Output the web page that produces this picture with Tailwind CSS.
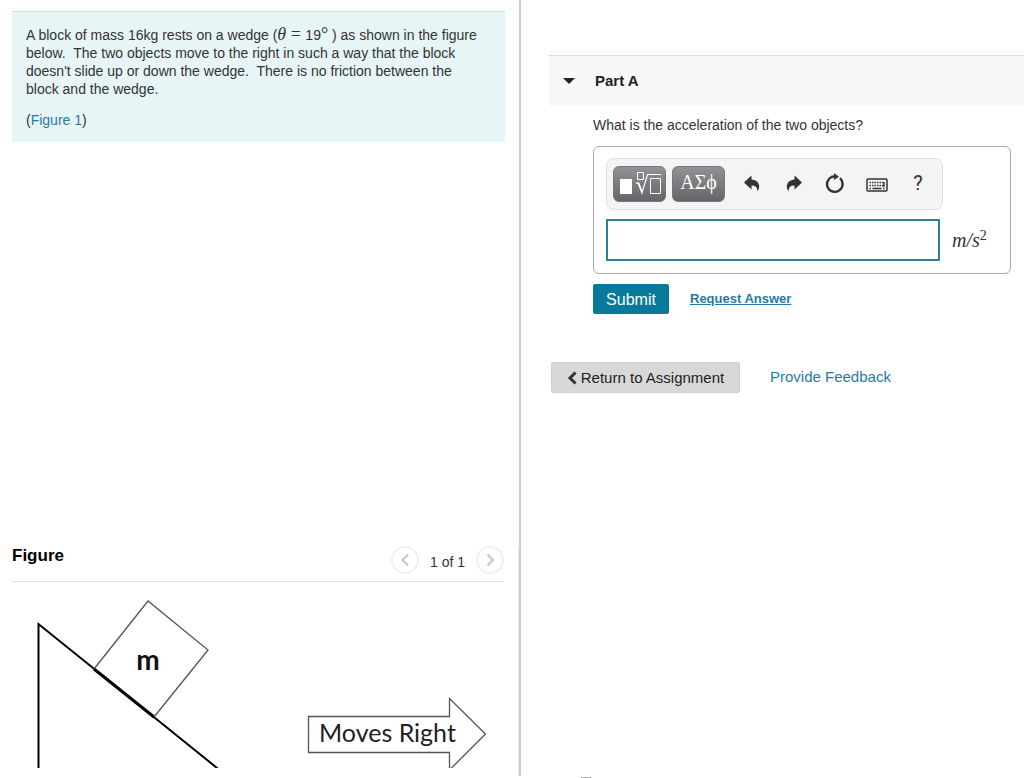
<!doctype html>
<html lang="en">
<head>
    <meta charset="UTF-8">
    <meta name="viewport" content="width=device-width, initial-scale=1.0">
    <title>Part A | Block on a wedge</title>
    <script src="https://cdn.jsdelivr.net/npm/@tailwindcss/browser@4"></script>
</head>

<body class="bg-white font-['Liberation_Sans',Arial,sans-serif] text-[14px] leading-[18px] text-[#333]">
    <main class="grid grid-cols-[521fr_503fr] h-screen overflow-hidden">
        <!-- problem and figure -->
        <div class="flex flex-col justify-between mb-0.5 pt-[11px] pl-3 border-r-2 border-[#c5d1dc]">
            <section class="mr-3.5 pl-3.5 pr-7 py-[13px] bg-[#e7f5f6] border-t border-[#cfdedf]">
                <p>A block of mass 16kg rests on a wedge (<span class="font-['Liberation_Serif',serif] text-[18px] leading-none"><i>θ</i> = </span>19<span class="font-['Liberation_Serif',serif] text-[18px] leading-none">°</span> ) as shown in the figure below.&nbsp; The two objects move to the right in such a way that the block doesn't slide up or down the wedge.&nbsp; There is no friction between the block and the wedge.</p>
                <p class="mt-[13px]">(<a href="#figure" class="text-[#1f7ba6]">Figure 1</a>)</p>
            </section>

            <section id="figure" class="pr-3.5 pb-2 border-r border-[#e3e9ee]">
                <div class="flex items-center justify-between pb-[7px] border-b border-[#ddd]">
                    <h2 class="pb-2 text-[17px] font-bold text-black">Figure</h2>
                    <div class="flex items-center gap-[11px]">
                        <button type="button" aria-label="Previous figure" class="grid place-items-center size-7 rounded-full border-2 border-[#f0f0f0]">
                            <svg class="size-3" viewBox="0 0 12 12" fill="none" stroke="#c4c4c4" stroke-width="2"><path d="M9 .5 3.500 6 9 11.500"/></svg>
                        </button>
                        <span class="pt-1">1 of 1</span>
                        <button type="button" aria-label="Next figure" class="grid place-items-center size-7 rounded-full border-2 border-[#f0f0f0]">
                            <svg class="size-3" viewBox="0 0 12 12" fill="none" stroke="#c4c4c4" stroke-width="2"><path d="M3.500.5 9 6l-5.500 5.500"/></svg>
                        </button>
                    </div>
                </div>

                <svg class="block w-full" viewBox="0 0 492 186" fill="none" role="img" aria-label="Block m on a wedge that moves right">
                    <path d="M26.500 190V42L210 190" stroke="#000" stroke-width="2"/>
                    <path d="m82 87 60 48" stroke="#000" stroke-width="3"/>
                    <path d="m82 87 54-68 60 49-54 67" stroke="#555" stroke-width="1.300"/>
                    <text x="136" y="88" text-anchor="middle" fill="#111" class="font-['Lato',sans-serif] text-[28px] font-bold">m</text>
                    <path d="M296.500 134.500h141v-18L473.500 152l-36 36v-17.500h-141z" stroke="#555" stroke-width="1.300"/>
                    <text x="307" y="160" fill="#222" class="font-['Lato',sans-serif] text-[25px]">Moves Right</text>
                </svg>
            </section>
        </div>

        <!-- answer -->
        <div class="flex flex-col pt-[55px] pl-7">
            <h2 class="bg-[#f8f8f8] border-t border-[#ddd]">
                <button type="button" aria-expanded="true" class="flex items-center w-full h-[50px] pl-3.5 gap-5 text-[15px] font-bold text-[#222]">
                    <svg class="w-3 h-1.5" viewBox="0 0 12 6" fill="#222"><path d="M0 0h12L6 6z"/></svg>
                    Part A
                </button>
            </h2>

            <form class="ml-11 mr-[13px] mt-2.5" onsubmit="return false">
                <label for="answer">What is the acceleration of the two objects?</label>

                <div class="mt-3 px-3 pt-[11px] pb-3 border border-[#aaa] rounded-md">
                    <div class="flex items-center h-[52px] mr-[55px] px-1.5 border border-[#dfe1e4] rounded-lg bg-[#f4f4f4]">
                        <button type="button" aria-label="Templates" class="w-[53px] h-9 mr-1.5 rounded-md border border-[#77777b] bg-linear-to-b from-[#929296] to-[#66666a]">
                            <svg class="w-[51px] h-[34px]" viewBox="0 0 51 34" fill="none" stroke="#fff">
                                <path d="M6 12h12v15H6z" fill="#fff" stroke="none"/>
                                <path d="M23.500 5.500h6v7h-6z"/>
                                <path d="m22 16.500 2-1 4 10.500 5.500-18.500H47" stroke-width="1.200"/>
                                <path d="m24.500 16 3.500 9" stroke-width="1.800"/>
                                <path d="M36.500 11.500h10v15h-10z"/>
                            </svg>
                        </button>
                        <button type="button" aria-label="Symbols" class="w-[53px] h-9 pb-1 rounded-md border border-[#77777b] bg-linear-to-b from-[#929296] to-[#66666a] font-['Liberation_Serif',serif] text-[20px] text-white">ΑΣϕ</button>
                        <div class="flex flex-1 items-center justify-between ml-[15px] mr-1.5 pb-0.5">
                            <button type="button" aria-label="Undo" class="grid place-items-center size-6">
                                <svg class="size-4" viewBox="0 0 16 16" fill="#333"><path d="M0 7.500 7.500.5v4c4.500.3 7.700 3 7.700 7 0 2-.7 3.700-2 4.800.6-3.600-1.300-5.800-5.700-5.800v4z"/></svg>
                            </button>
                            <button type="button" aria-label="Redo" class="grid place-items-center size-6">
                                <svg class="size-4" viewBox="0 0 16 16" fill="#333"><path d="M16 7.500 8.500.5v4C4 4.800.8 7.500.8 11.500c0 2 .7 3.700 2 4.800-.6-3.600 1.300-5.800 5.700-5.800v4z"/></svg>
                            </button>
                            <button type="button" aria-label="Reset" class="grid place-items-center size-6">
                                <svg class="size-5" viewBox="0 0 20 20" fill="none"><path d="M15 5.200A7.800 7.800 0 1 1 6.500 4L10 3.300" stroke="#333" stroke-width="2.400"/><path d="M9 0l5 3.700L9 7z" fill="#333"/></svg>
                            </button>
                            <button type="button" aria-label="Keyboard shortcuts" class="grid place-items-center size-6">
                                <svg class="w-[22px] h-3.5 mt-1" viewBox="0 0 22 14" fill="none" stroke="#333">
                                    <rect x="1" y="1" width="20" height="12" rx="1" stroke-width="1.500"/>
                                    <path d="M3.500 4.500h15M3.500 7.500h13" stroke-width="1.500" stroke-dasharray="1.500 1"/>
                                    <path d="M18 4v4h-2M3.500 10.500H5m1.500 0h9m1.500 0h1.500" stroke-width="1.500"/>
                                </svg>
                            </button>
                            <button type="button" aria-label="Help" class="size-6 font-['Roboto',sans-serif] text-[20px] leading-6 text-[#333]">?</button>
                        </div>
                    </div>

                    <div class="flex items-center mt-[9px]">
                        <input id="answer" type="text" class="flex-1 min-w-0 h-[42px] px-2 border-2 border-[#2d8099] bg-white outline-none">
                        <span class="w-[46px] ml-3 font-['Liberation_Serif',serif] text-[20px] italic">m/s<sup class="text-[14px] not-italic">2</sup></span>
                    </div>
                </div>

                <div class="flex items-center mt-2.5 gap-[21px]">
                    <button type="submit" class="w-[76px] h-[30px] pt-0.5 rounded-xs bg-[#077a9c] text-[16px] text-white">Submit</button>
                    <a href="#" class="text-[13px] font-bold text-[#1f7ba6] underline">Request Answer</a>
                </div>
            </form>

            <div class="flex items-center mt-12 ml-0.5 gap-[30px] text-[15px]">
                <a href="#" class="flex items-center justify-center w-[189px] h-[31px] gap-1 rounded-xs border border-[#cfcfcf] bg-[#d8d8d8] text-[#222]">
                    <svg class="w-2.5 h-3.5" viewBox="0 0 10 14" fill="none" stroke="#333" stroke-width="3"><path d="M8.500 1.500 3 7l5.500 5.500"/></svg>
                    Return to Assignment
                </a>
                <a href="#" class="pb-0.5 text-[#1f7ba6]">Provide Feedback</a>
            </div>

            <!-- top edge of the footer logo -->
            <div class="mt-auto ml-8 w-2.5 h-px bg-[#a9b8bb]"></div>
        </div>
    </main>
</body>
</html>
